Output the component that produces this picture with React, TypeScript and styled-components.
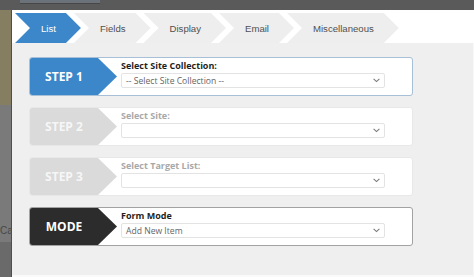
import React from "react";
import styled, { createGlobalStyle } from "styled-components";

type Tone = "active" | "disabled" | "mode";

const Global = createGlobalStyle`
  html, body { margin: 0; padding: 0; background: #5c5c5c; overflow: hidden; }
  * { box-sizing: border-box; }
`;

const Page = styled.div`
  width: 474px;
  height: 277px;
  display: flex;
  flex-direction: column;
  overflow: hidden;
`;

const TopShade = styled.div`
  height: 10px;
  flex: none;
  background: #5a5a5a;
  display: flex;
  padding-left: 20px;
`;

const ShadeLink = styled.div`
  width: 80px;
  height: 4px;
  background: #6c7279;
  border-bottom: 1px solid #474747;
`;

const Body = styled.div`
  flex: 1;
  display: flex;
  min-height: 0;
`;

const SideShade = styled.div`
  width: 12px;
  flex: none;
  border-right: 1px solid #4e4e4e;
  background: linear-gradient(
    to bottom,
    #867e61 0,
    #867e61 95px,
    #7a7a7a 95px,
    #7a7a7a 232px,
    #6a6a6a 232px
  );
  overflow: hidden;
  white-space: nowrap;
  padding-top: 215px;
  font: 10px/12px "Liberation Sans", Arial, sans-serif;
  color: #474747;
`;

const Modal = styled.div`
  flex: 1;
  display: flex;
  flex-direction: column;
  background: #fff;
`;

const TabBar = styled.div`
  height: 33px;
  flex: none;
  display: flex;
  padding: 3px 0 0 3px;
  background: #fff;
`;

const Tab = styled.div<{ $active?: boolean }>`
  height: 30px;
  padding: 0 25px 0 26px;
  display: flex;
  align-items: center;
  font: 9.6px "Liberation Sans", Arial, sans-serif;
  color: ${(p) => (p.$active ? "#ffffff" : "#505050")};
  background: ${(p) => (p.$active ? "#3b87c9" : "#eeeeee")};
  clip-path: polygon(
    0 0,
    calc(100% - 15px) 0,
    100% 50%,
    calc(100% - 15px) 100%,
    0 100%,
    15px 50%
  );
  & + & {
    margin-left: -7px;
  }
`;

const Content = styled.div`
  flex: 1;
  display: flex;
  flex-direction: column;
  gap: 11px;
  padding: 14px 0 0 17px;
  background: #efefef;
  border-bottom: 2px solid #fafafa;
  border-right: 1px solid #f8f8f8;
`;

const borderColor: Record<Tone, string> = {
  active: "#a7bfd7",
  disabled: "#e8e8e8",
  mode: "#a2a2a2",
};
const badgeColor: Record<Tone, string> = {
  active: "#3b87c9",
  disabled: "#dadada",
  mode: "#2c2c2c",
};
const labelColor: Record<Tone, string> = {
  active: "#1f1f1f",
  disabled: "#a8a8a8",
  mode: "#1f1f1f",
};

const Card = styled.div<{ $tone: Tone }>`
  width: 384px;
  height: 39px;
  display: flex;
  background: #fff;
  border: 1px solid ${(p) => borderColor[p.$tone]};
  border-radius: 3px;
  overflow: hidden;
`;

const Badge = styled.div<{ $tone: Tone }>`
  width: 87px;
  flex: none;
  padding-right: 19px;
  display: flex;
  align-items: center;
  justify-content: center;
  background: ${(p) => badgeColor[p.$tone]};
  color: ${(p) => (p.$tone === "disabled" ? "#f6f6f6" : "#ffffff")};
  font: 700 12px "Open Sans", sans-serif;
  clip-path: polygon(
    0 0,
    calc(100% - 19px) 0,
    100% 50%,
    calc(100% - 19px) 100%,
    0 100%
  );
`;

const Field = styled.div`
  flex: 1;
  display: flex;
  flex-direction: column;
  padding: 2px 27px 0 4px;
`;

const Label = styled.div<{ $tone: Tone }>`
  font: 700 9px/12px "Open Sans", sans-serif;
  color: ${(p) => labelColor[p.$tone]};
  white-space: nowrap;
`;

const Select = styled.div`
  margin-top: 1px;
  height: 15px;
  display: flex;
  align-items: center;
  justify-content: space-between;
  padding: 0 4px 0 4px;
  border: 1px solid #e3e3e3;
  border-radius: 2px;
  background: #fff;
  font: 8.6px "Open Sans", sans-serif;
  color: #656565;
  white-space: nowrap;
`;

const Chevron = () => (
  <svg width="7" height="5" viewBox="0 0 7 5" style={{ flex: "none" }}>
    <path d="M0.6 0.8 L3.5 3.6 L6.4 0.8" fill="none" stroke="#7a7a7a" strokeWidth="1.1" />
  </svg>
);

const tabs = ["List", "Fields", "Display", "Email", "Miscellaneous"];

const steps: { tone: Tone; badge: string; label: string; value: string }[] = [
  { tone: "active", badge: "STEP 1", label: "Select Site Collection:", value: "-- Select Site Collection --" },
  { tone: "disabled", badge: "STEP 2", label: "Select Site:", value: "" },
  { tone: "disabled", badge: "STEP 3", label: "Select Target List:", value: "" },
  { tone: "mode", badge: "MODE", label: "Form Mode", value: "Add New Item" },
];

export default function App() {
  return (
    <>
      <Global />
      <Page>
        <TopShade>
          <ShadeLink />
        </TopShade>
        <Body>
          <SideShade>Ca</SideShade>
          <Modal>
            <TabBar>
              {tabs.map((t, i) => (
                <Tab key={t} $active={i === 0}>
                  {t}
                </Tab>
              ))}
            </TabBar>
            <Content>
              {steps.map((s) => (
                <Card key={s.badge} $tone={s.tone}>
                  <Badge $tone={s.tone}>{s.badge}</Badge>
                  <Field>
                    <Label $tone={s.tone}>{s.label}</Label>
                    <Select>
                      <span>{s.value}</span>
                      <Chevron />
                    </Select>
                  </Field>
                </Card>
              ))}
            </Content>
          </Modal>
        </Body>
      </Page>
    </>
  );
}
